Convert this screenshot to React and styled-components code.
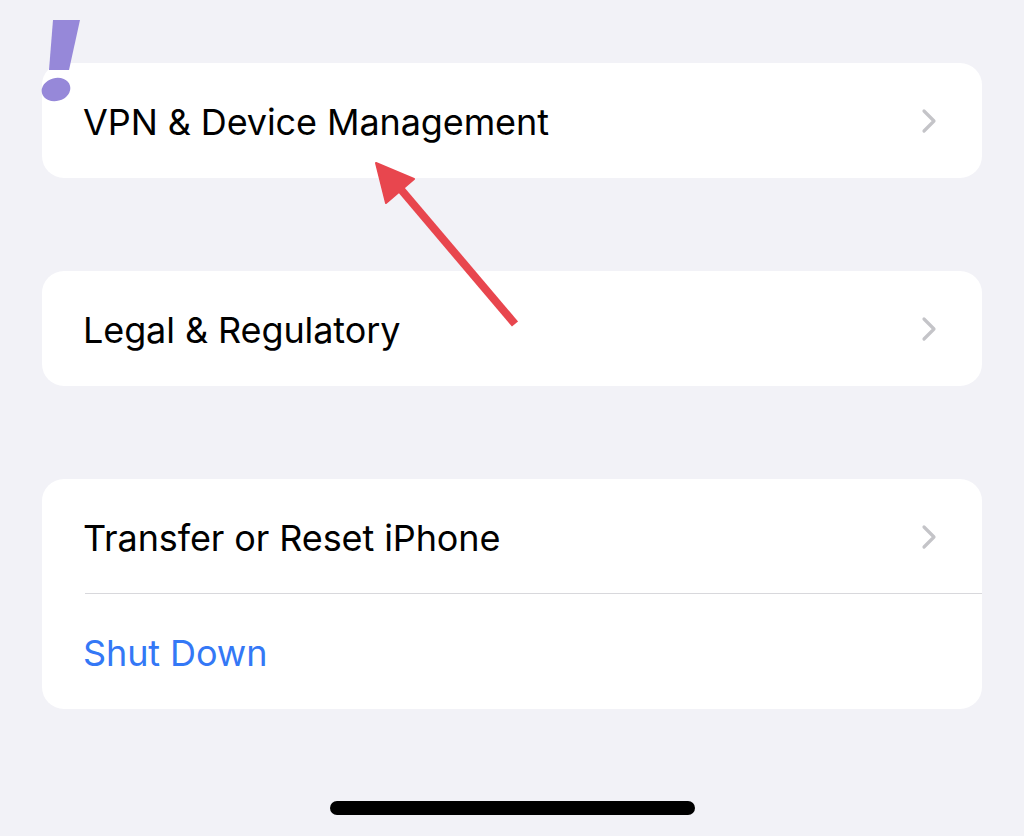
import React from 'react';
import styled, {createGlobalStyle} from 'styled-components';

const GlobalStyle = createGlobalStyle`
    html, body {
        margin: 0;
        padding: 0;
        background: #f2f2f7;
    }
    body {
        font-family: Inter, "Noto Sans", "Liberation Sans", sans-serif;
        -webkit-font-smoothing: antialiased;
    }
`;

const Screen = styled.div`
    position: relative;
    width: 1024px;
    height: 836px;
    overflow: hidden;
    background: #f2f2f7;
    box-sizing: border-box;
    padding: 63px 42px 0;
    display: flex;
    flex-direction: column;
    gap: 93px;
`;

const Group = styled.div`
    background: #ffffff;
    border-radius: 22px;
    overflow: hidden;
`;

const Row = styled.div`
    height: 115px;
    display: flex;
    align-items: center;
    padding-left: 41px;
    padding-right: 44px;
    position: relative;
    ${props => props.divider && `
        &::after {
            content: '';
            position: absolute;
            left: 43px;
            right: 0;
            bottom: 0;
            height: 1.5px;
            background: #d8d8dc;
        }
    `}
`;

const Label = styled.span`
    flex: 1;
    font-size: 36px;
    letter-spacing: -0.1px;
    padding-top: 2px;
    color: ${props => props.blue ? '#3478f6' : '#000000'};
`;

const Chevron = () => (
    <svg width="18" height="26" viewBox="0 0 18 26">
        <path d="M4 3 L14 13 L4 23" fill="none" stroke="#c4c4c8" strokeWidth="3.2" strokeLinecap="round" strokeLinejoin="round" />
    </svg>
);

const HomeBar = styled.div`
    position: absolute;
    left: 330px;
    top: 801px;
    width: 365px;
    height: 14px;
    border-radius: 7px;
    background: #000;
`;

const Overlay = styled.svg`
    position: absolute;
    left: 0;
    top: 0;
    pointer-events: none;
`;

const rows = [
    [{label: 'VPN & Device Management', chevron: true}],
    [{label: 'Legal & Regulatory', chevron: true}],
    [{label: 'Transfer or Reset iPhone', chevron: true}, {label: 'Shut Down', blue: true}],
];

const App = () => {
    return (
        <>
            <GlobalStyle />
            <Screen>
                {rows.map((group, gi) => (
                    <Group key={gi}>
                        {group.map((r, ri) => (
                            <Row key={ri} divider={ri < group.length - 1}>
                                <Label blue={r.blue}>{r.label}</Label>
                                {r.chevron && <Chevron />}
                            </Row>
                        ))}
                    </Group>
                ))}
                <HomeBar />
                <Overlay width="1024" height="836" viewBox="0 0 1024 836">
                    {/* exclamation mark logo */}
                    <path d="M53 20 L80 20 L69 70 L49 70 Z" fill="#9688d9" />
                    <ellipse cx="56" cy="89.5" rx="14.5" ry="11.5" transform="rotate(-15 56 89.5)" fill="#9688d9" />
                    {/* red arrow */}
                    <line x1="515" y1="324" x2="398" y2="186" stroke="#e8464e" strokeWidth="8" strokeLinecap="butt" />
                    <path d="M376 163 L414 179 L386 203 Z" fill="#e8464e" strokeLinejoin="round" stroke="#e8464e" strokeWidth="2" />
                </Overlay>
            </Screen>
        </>
    );
};

export default App;
